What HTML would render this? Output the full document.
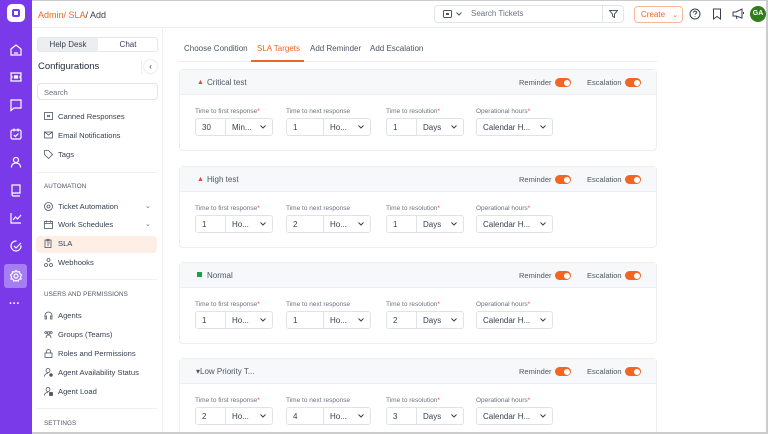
<!DOCTYPE html>
<html style="overflow:hidden"><head><meta charset="utf-8"><style>
*{box-sizing:border-box;margin:0;padding:0}
html,body{width:768px;height:434px;overflow:hidden}
body{background:#fff;font-family:"Liberation Sans",sans-serif;color:#374151;position:relative}
.a{position:absolute}
.side{left:0;top:0;width:32px;height:434px;background:#7b3aea}
.si{position:absolute;left:9px;width:14px;height:14px}
.hdr{left:32px;top:0;width:736px;height:28px;border-bottom:1px solid #eceef1;border-top:1px solid #ccc}
.lp{left:32px;top:28px;width:131px;height:406px;border-right:1px solid #eceef1}
.item{position:absolute;left:44px;font-size:7.6px;color:#374151;display:flex;align-items:center;gap:5px}
.item svg{width:9px;height:9px}
.sec{position:absolute;left:44px;font-size:6.3px;color:#4b5563;letter-spacing:.1px}
.div{position:absolute;left:36px;width:121px;height:1px;background:#eef0f2}
.card{position:absolute;left:179px;width:478px;border:1px solid #eceef1;border-radius:4px;background:#fff}
.ch{height:25px;background:#f7f8fa;border-bottom:1px solid #eceef1;position:relative;font-size:8px;color:#4b5563}
.lbl{position:absolute;font-size:6.5px;color:#6b7280}
.lbl b{color:#ef4444;font-weight:normal}
.in{position:absolute;height:18px;border:1px solid #dfe2e6;border-radius:3px;font-size:8px;color:#374151;display:flex;align-items:center;background:#fff}
.in span{padding-left:6px}
.in .s{position:absolute;top:0;bottom:0;border-left:1px solid #dfe2e6;display:flex;align-items:center;padding-left:6px}
.chev{position:absolute;right:6px;top:6px;width:6px;height:4px}
.tg{position:absolute;width:16px;height:9px;border-radius:5px;background:#f26522}
.tg:after{content:"";position:absolute;right:1.5px;top:1.5px;width:6px;height:6px;border-radius:50%;background:#fff}
.tl{position:absolute;font-size:7.5px;color:#4b5563}
</style></head><body>
<div class="a side">
 <div class="a" style="left:7px;top:4px;width:18px;height:18px;border-radius:5px;background:#fff"><div class="a" style="left:5px;top:5px;width:8px;height:8px;border:2px solid #7b3aea;border-radius:2px"></div></div>
 <svg class="si" style="top:43px" viewBox="0 0 14 14" fill="none" stroke="#fff" stroke-width="1.2"><path d="M2 6L7 2l5 4v6H2z M5 10h4"/></svg>
 <svg class="si" style="top:70px" viewBox="0 0 14 14" fill="none" stroke="#fff" stroke-width="1.2"><path d="M2 3h10v3a1 1 0 000 2v3H2V8a1 1 0 000-2z"/><rect x="5.5" y="6" width="3" height="2" fill="#fff"/></svg>
 <svg class="si" style="top:98px" viewBox="0 0 14 14" fill="none" stroke="#fff" stroke-width="1.2"><path d="M2 2h10v8H5l-3 2.5z"/></svg>
 <svg class="si" style="top:127px" viewBox="0 0 14 14" fill="none" stroke="#fff" stroke-width="1.2"><rect x="2" y="3" width="10" height="9" rx="1.5"/><path d="M5 1.5v3M9 1.5v3M4.8 8l1.6 1.5 3-3"/></svg>
 <svg class="si" style="top:155px" viewBox="0 0 14 14" fill="none" stroke="#fff" stroke-width="1.2"><circle cx="7" cy="5" r="2.5"/><path d="M2.5 12.5c0-3 2-4.5 4.5-4.5s4.5 1.5 4.5 4.5"/></svg>
 <svg class="si" style="top:183px" viewBox="0 0 14 14" fill="none" stroke="#fff" stroke-width="1.2"><path d="M3 2h8v8H4.5A1.5 1.5 0 003 11.5zM3 11.5A1.5 1.5 0 004.5 13H11"/></svg>
 <svg class="si" style="top:211px" viewBox="0 0 14 14" fill="none" stroke="#fff" stroke-width="1.2"><path d="M2 2v10h10M4 9l2.5-3 2 2L12 4"/></svg>
 <svg class="si" style="top:239px" viewBox="0 0 14 14" fill="none" stroke="#fff" stroke-width="1.2"><path d="M12 6.5A5 5 0 117.5 2M5 7l2 2 5-5"/></svg>
 <div class="a" style="left:4px;top:264px;width:23px;height:24px;border-radius:3px;background:#a57ef3"></div>
 <svg class="si" style="top:269px" viewBox="0 0 14 14" fill="none" stroke="#fff" stroke-width="1.2"><circle cx="7" cy="7" r="2"/><path d="M7 1.5l1.3 1.5 2-.3.5 2 1.7 1.3-1 1.9.5 2-2 .5-1 1.8-2-.8-2 .8-1-1.8-2-.5.5-2-1-1.9L3.2 4.7l.5-2 2 .3z"/></svg>
 <div class="a" style="left:9px;top:298px;color:#fff;font-size:11px;font-weight:bold">···</div>
</div>

<div class="a hdr">
 <div class="a" style="left:6px;top:9px;font-size:9px;color:#f26522">Admin/ SLA<span style="color:#374151">/ Add</span></div>
 <div class="a" style="left:402px;top:4px;width:190px;height:18px;border:1px solid #e1e4e8;border-radius:4px">
  <svg class="a" style="left:8px;top:4px" width="9" height="8" viewBox="0 0 9 8" fill="none" stroke="#4b5563"><rect x="0.5" y="0.5" width="8" height="7" rx="1"/><rect x="3" y="3" width="3" height="2" fill="#4b5563" stroke="none"/></svg>
  <svg class="a" style="left:21px;top:6px" width="6" height="4" viewBox="0 0 6 4" fill="none" stroke="#4b5563"><path d="M.5.5l2.5 2.5L5.5.5"/></svg>
  <div class="a" style="left:36px;top:3px;font-size:8px;color:#6b7280">Search Tickets</div>
  <div class="a" style="left:167px;top:0;height:16px;border-left:1px solid #e1e4e8"></div>
  <svg class="a" style="left:174px;top:4px" width="9" height="8" viewBox="0 0 9 8" fill="none" stroke="#4b5563"><path d="M.5.5h8L5.5 4v3.5L3.5 6V4z"/></svg>
 </div>
 <div class="a" style="left:602px;top:5px;width:49px;height:17px;border:1px solid #f7b89a;border-radius:4px;font-size:8px;color:#f26522;padding:3px 0 0 6px">Create <span style="font-size:7px;margin-left:5px">⌄</span></div>
 <svg class="a" style="left:657px;top:7px" width="12" height="12" viewBox="0 0 12 12" fill="none" stroke="#374151"><circle cx="6" cy="6" r="5"/><path d="M4.5 4.6a1.5 1.5 0 113 0c0 1-1.5 1.1-1.5 2.2M6 8.4v.6"/></svg>
 <svg class="a" style="left:680px;top:7px" width="10" height="12" viewBox="0 0 10 12" fill="none" stroke="#374151"><path d="M1.5 1h7v10L5 8.5 1.5 11z"/></svg>
 <svg class="a" style="left:700px;top:7px" width="13" height="12" viewBox="0 0 13 12" fill="none" stroke="#374151"><path d="M1 4h3l6-3v9L4 8H1zM4 8l1 3M11.5 4v2"/></svg>
 <div class="a" style="left:718px;top:5px;width:16px;height:16px;border-radius:50%;background:#2f7d1b;color:#fff;font-size:7px;font-weight:bold;text-align:center;line-height:16px">GA</div>
</div>
<div class="a" style="left:766px;top:0;width:2px;height:434px;background:#ccc"></div>

<div class="a lp"></div>
<div class="a" style="left:37px;top:37px;width:121px;height:15px;border:1px solid #e5e7eb;border-radius:3px;font-size:8px">
 <div class="a" style="left:0;top:0;width:60px;height:13px;background:#eceef1;text-align:center;line-height:13px">Help Desk</div>
 <div class="a" style="left:60px;top:0;width:60px;height:13px;text-align:center;line-height:13px">Chat</div>
</div>
<div class="a" style="left:38px;top:61px;font-size:9.5px;color:#1f2937">Configurations</div>
<div class="a" style="left:141px;top:60px;height:14px;border-left:1px solid #eee"></div>
<div class="a" style="left:144px;top:60px;width:13px;height:13px;border-radius:50%;box-shadow:0 0 2px #ccc;font-size:8px;text-align:center;line-height:13px;color:#374151">‹</div>
<div class="a" style="left:37px;top:83px;width:121px;height:17px;border:1px solid #e1e4e8;border-radius:4px;font-size:7.5px;color:#6b7280;padding:4px 0 0 6px">Search</div>
<div class="item" style="top:112px"><svg viewBox="0 0 9 9" fill="none" stroke="#4b5563" stroke-width=".8"><rect x=".5" y=".5" width="8" height="7"/><path d="M3 3l3 2M3 5l3-2"/></svg>Canned Responses</div>
<div class="item" style="top:131px"><svg viewBox="0 0 9 9" fill="none" stroke="#4b5563" stroke-width=".8"><rect x=".5" y="1" width="8" height="6"/><path d="M.5 1l4 3 4-3"/></svg>Email Notifications</div>
<div class="item" style="top:150px"><svg viewBox="0 0 9 9" fill="none" stroke="#4b5563" stroke-width=".8"><path d="M.5.5h4l4 4-4 4-4-4z"/></svg>Tags</div>
<div class="div" style="top:172px"></div>
<div class="sec" style="top:183px">AUTOMATION</div>
<div class="item" style="top:202px"><svg viewBox="0 0 9 9" fill="none" stroke="#4b5563" stroke-width=".8"><circle cx="4.5" cy="4.5" r="4"/><circle cx="4.5" cy="4.5" r="1.5"/></svg>Ticket Automation</div>
<div class="a" style="left:145px;top:202px;font-size:7px;color:#6b7280">⌄</div>
<div class="item" style="top:220px"><svg viewBox="0 0 9 9" fill="none" stroke="#4b5563" stroke-width=".8"><rect x=".5" y="1.5" width="8" height="7"/><path d="M.5 3.5h8M2.5 .5v2M6.5.5v2"/></svg>Work Schedules</div>
<div class="a" style="left:145px;top:220px;font-size:7px;color:#6b7280">⌄</div>
<div class="a" style="left:36px;top:236px;width:121px;height:17px;background:#fdeee6;border-radius:4px"></div>
<div class="item" style="top:239px"><svg viewBox="0 0 9 9" fill="none" stroke="#4b5563" stroke-width=".8"><rect x="1" y="1" width="6" height="7.5"/><path d="M3 .5h2v1.5H3zM3 4h3M3 6h2"/></svg>SLA</div>
<div class="item" style="top:258px"><svg viewBox="0 0 9 9" fill="none" stroke="#4b5563" stroke-width=".8"><circle cx="4.5" cy="2" r="1.5"/><circle cx="2" cy="7" r="1.5"/><circle cx="7" cy="7" r="1.5"/></svg>Webhooks</div>
<div class="div" style="top:279px"></div>
<div class="sec" style="top:291px">USERS AND PERMISSIONS</div>
<div class="item" style="top:311px"><svg viewBox="0 0 9 9" fill="none" stroke="#4b5563" stroke-width=".8"><path d="M1 6V4.5a3.5 3.5 0 017 0V6M1 5h1.5v3H1zM6.5 5H8v3H6.5z"/></svg>Agents</div>
<div class="item" style="top:330px"><svg viewBox="0 0 9 9" fill="none" stroke="#4b5563" stroke-width=".8"><circle cx="4.5" cy="3" r="1.3"/><circle cx="1.8" cy="2.5" r="1"/><circle cx="7.2" cy="2.5" r="1"/><path d="M2 8c0-2 1-3 2.5-3S7 6 7 8"/></svg>Groups (Teams)</div>
<div class="item" style="top:349px"><svg viewBox="0 0 9 9" fill="none" stroke="#4b5563" stroke-width=".8"><rect x="1" y="4" width="7" height="4.5"/><path d="M2.5 4V2.5a2 2 0 014 0V4"/></svg>Roles and Permissions</div>
<div class="item" style="top:368px"><svg viewBox="0 0 9 9" fill="none" stroke="#4b5563" stroke-width=".8"><circle cx="4" cy="2.5" r="2"/><path d="M.5 8.5c0-2 1.5-3 3.5-3"/><circle cx="7" cy="7" r="1.3" fill="#4b5563"/></svg>Agent Availability Status</div>
<div class="item" style="top:387px"><svg viewBox="0 0 9 9" fill="none" stroke="#4b5563" stroke-width=".8"><circle cx="4" cy="2.5" r="2"/><path d="M.5 8.5c0-2 1.5-3 3.5-3"/><rect x="5.5" y="5.5" width="3" height="3" fill="#4b5563"/></svg>Agent Load</div>
<div class="div" style="top:408px"></div>
<div class="sec" style="top:420px">SETTINGS</div>

<div class="a" style="left:184px;top:44px;font-size:8px;color:#4b5563">Choose Condition</div>
<div class="a" style="left:257px;top:44px;font-size:8px;color:#f26522">SLA Targets</div>
<div class="a" style="left:310px;top:44px;font-size:8px;color:#4b5563">Add Reminder</div>
<div class="a" style="left:370px;top:44px;font-size:8px;color:#4b5563">Add Escalation</div>
<div class="a" style="left:179px;top:61px;width:478px;height:1px;background:#eceef1"></div>
<div class="a" style="left:251px;top:60px;width:53px;height:2px;background:#f26522"></div>

<div id="cards"></div>
<script>
var cards=[
 {t:69,name:"Critical test",ic:'<span style="color:#ef4444;font-size:7px">▲</span>',v:["30","Min...","1","Ho...","1","Days"]},
 {t:166,name:"High test",ic:'<span style="color:#ef4444;font-size:7px">▲</span>',v:["1","Ho...","2","Ho...","1","Days"]},
 {t:262,name:"Normal",ic:'<span style="display:inline-block;width:5px;height:5px;background:#16a34a"></span>',v:["1","Ho...","1","Ho...","2","Days"]},
 {t:358,name:"Low Priority T...",ic:'',v:["2","Ho...","4","Ho...","3","Days"]}];
var h="";
var chev='<svg class="chev" viewBox="0 0 6 4" fill="none" stroke="#374151"><path d="M.5.5L3 3 5.5.5"/></svg>';
cards.forEach(function(c,i){
 var ic=c.ic?'<span class="a" style="left:17px;top:7px">'+c.ic+'</span><span class="a" style="left:27px;top:8px">'+c.name+'</span>':'<span class="a" style="left:16px;top:8px">▾'+c.name+'</span>';
 h+='<div class="card" style="top:'+c.t+'px;height:'+(i==3?76:82)+'px;'+(i==3?'border-bottom:none;border-radius:4px 4px 0 0':'')+'"><div class="ch">'+ic+
 '<span class="tl" style="left:339px;top:8px">Reminder</span><div class="tg" style="left:375px;top:8px"></div>'+
 '<span class="tl" style="left:407px;top:8px">Escalation</span><div class="tg" style="left:445px;top:8px"></div></div>'+
 '<div class="lbl" style="left:15px;top:38px">Time to first response<b>*</b></div>'+
 '<div class="lbl" style="left:106px;top:38px">Time to next response</div>'+
 '<div class="lbl" style="left:206px;top:38px">Time to resolution<b>*</b></div>'+
 '<div class="lbl" style="left:296px;top:38px">Operational hours<b>*</b></div>'+
 '<div class="in" style="left:15px;top:48px;width:78px"><span>'+c.v[0]+'</span><div class="s" style="left:29px;right:0">'+c.v[1]+'</div>'+chev+'</div>'+
 '<div class="in" style="left:106px;top:48px;width:85px"><span>'+c.v[2]+'</span><div class="s" style="left:36px;right:0">'+c.v[3]+'</div>'+chev+'</div>'+
 '<div class="in" style="left:206px;top:48px;width:78px"><span>'+c.v[4]+'</span><div class="s" style="left:29px;right:0">'+c.v[5]+'</div>'+chev+'</div>'+
 '<div class="in" style="left:296px;top:48px;width:77px"><span>Calendar H...</span>'+chev+'</div></div>';
});
document.getElementById("cards").innerHTML=h;
</script>
<div class="a" style="left:32px;top:432px;width:736px;height:2px;background:#ccc"></div>
</body></html>
